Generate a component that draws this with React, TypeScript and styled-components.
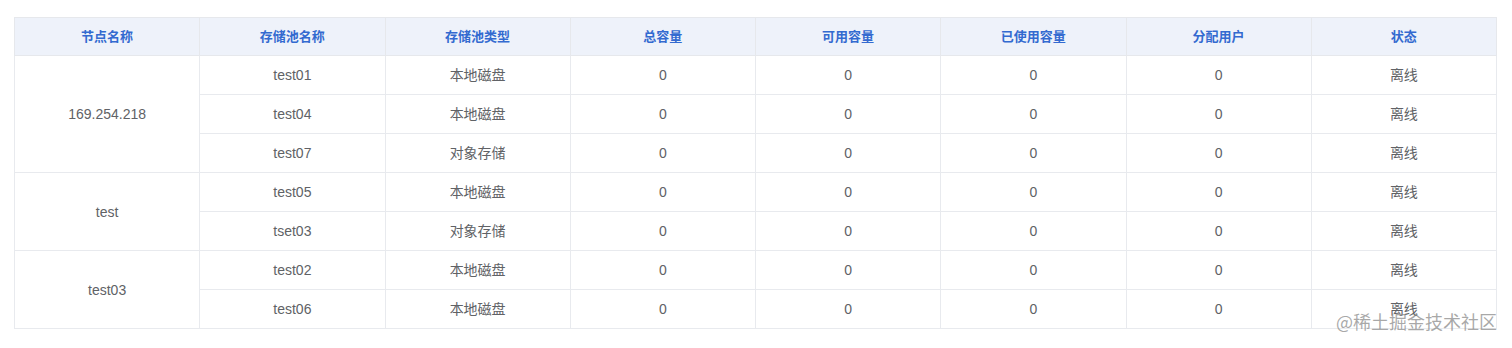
import React from "react";
import styled, { createGlobalStyle } from "styled-components";

const Global = createGlobalStyle`
  html, body { margin: 0; padding: 0; background: #fff; }
  body { font-family: "Liberation Sans", "Noto Sans CJK SC", sans-serif; }
`;

const Page = styled.div`
  position: relative;
  width: 1512px;
  height: 348px;
  padding: 17px 15px 0 14px;
  box-sizing: border-box;
`;

const Table = styled.table`
  width: 1483px;
  border-collapse: collapse;
  table-layout: fixed;
  border: 1px solid #e6e8ec;
`;

const Th = styled.th`
  height: 37px;
  padding: 0;
  background: #eef2fa;
  color: #336ad0;
  font-size: 13px;
  line-height: 18px;
  font-weight: bold;
  text-align: center;
  border: 1px solid #e6e8ec;
`;

const Td = styled.td`
  height: 38px;
  padding: 0;
  color: #606266;
  font-size: 14px;
  line-height: 18px;
  text-align: center;
  border: 1px solid #e8eaee;
  background: #fff;
`;

const Watermark = styled.div`
  position: absolute;
  right: 15px;
  top: 309px;
  font-family: "Noto Sans CJK SC", sans-serif;
  font-size: 18px;
  line-height: 24px;
  color: rgba(140, 140, 140, 0.75);
`;

const headers = ["节点名称", "存储池名称", "存储池类型", "总容量", "可用容量", "已使用容量", "分配用户", "状态"];

const groups = [
  { node: "169.254.218", pools: [["test01", "本地磁盘"], ["test04", "本地磁盘"], ["test07", "对象存储"]] },
  { node: "test", pools: [["test05", "本地磁盘"], ["tset03", "对象存储"]] },
  { node: "test03", pools: [["test02", "本地磁盘"], ["test06", "本地磁盘"]] },
];

export default function App() {
  return (
    <>
      <Global />
      <Page>
        <Table>
          <thead>
            <tr>
              {headers.map((h) => (
                <Th key={h}>{h}</Th>
              ))}
            </tr>
          </thead>
          <tbody>
            {groups.map((g) =>
              g.pools.map(([name, type], i) => (
                <tr key={g.node + name}>
                  {i === 0 && <Td rowSpan={g.pools.length}>{g.node}</Td>}
                  <Td>{name}</Td>
                  <Td>{type}</Td>
                  <Td>0</Td>
                  <Td>0</Td>
                  <Td>0</Td>
                  <Td>0</Td>
                  <Td>离线</Td>
                </tr>
              ))
            )}
          </tbody>
        </Table>
        <Watermark>@稀土掘金技术社区</Watermark>
      </Page>
    </>
  );
}
